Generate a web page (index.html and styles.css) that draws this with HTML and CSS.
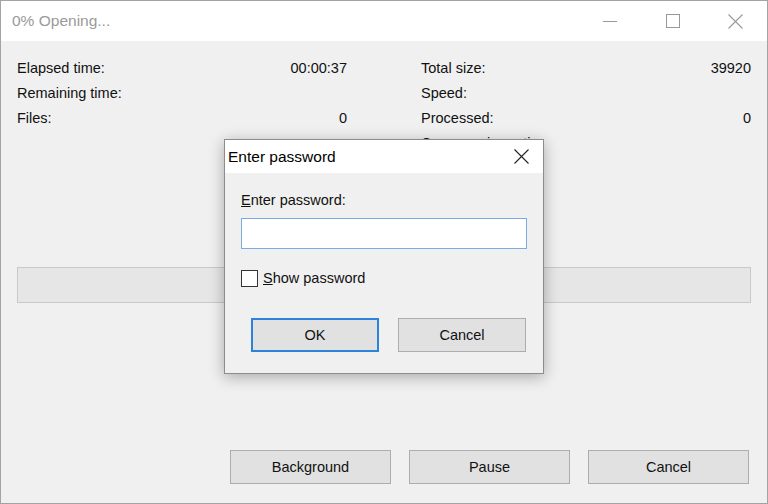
FILE: index.html
```html
<!DOCTYPE html>
<html lang="en">
<head>
  <meta charset="UTF-8" />
  <title>0% Opening...</title>
  <link rel="stylesheet" href="styles.css">
</head>
<body>
  <div class="window">
    <div class="titlebar">
      <span class="title">0% Opening...</span>
      <div class="controls">
        <span class="ctl">
          <svg width="14" height="14" viewBox="0 0 14 14"><path d="M0 7.5h14" stroke="#999" stroke-width="1" fill="none"/></svg>
        </span>
        <span class="ctl">
          <svg width="14" height="14" viewBox="0 0 14 14"><rect x="0.5" y="0.5" width="13" height="13" stroke="#999" stroke-width="1" fill="none"/></svg>
        </span>
        <span class="ctl">
          <svg width="15" height="15" viewBox="0 0 15 15"><path d="M0.5 0.5l14 14M14.5 0.5l-14 14" stroke="#999" stroke-width="1.1" fill="none"/></svg>
        </span>
      </div>
    </div>

    <div class="content">
      <div class="stats">
        <div class="col">
          <div class="row"><span>Elapsed time:</span><span>00:00:37</span></div>
          <div class="row"><span>Remaining time:</span><span></span></div>
          <div class="row"><span>Files:</span><span>0</span></div>
        </div>
        <div class="col">
          <div class="row"><span>Total size:</span><span>39920</span></div>
          <div class="row"><span>Speed:</span><span></span></div>
          <div class="row"><span>Processed:</span><span>0</span></div>
          <div class="row"><span>Compression ratio:</span><span></span></div>
        </div>
      </div>

      <div class="progress"></div>

      <div class="footer">
        <button class="btn wide">Background</button>
        <button class="btn wide">Pause</button>
        <button class="btn wide">Cancel</button>
      </div>
    </div>
  </div>

  <div class="dialog">
    <div class="dlg-titlebar">
      <span class="dlg-title">Enter password</span>
      <span class="dlg-close">
        <svg width="15" height="15" viewBox="0 0 15 15"><path d="M0.5 0.5l14 14M14.5 0.5l-14 14" stroke="#222" stroke-width="1.1" fill="none"/></svg>
      </span>
    </div>
    <div class="dlg-body">
      <div class="label"><u>E</u>nter password:</div>
      <input class="pwd" type="password" />
      <div class="check-row">
        <span class="checkbox"></span>
        <span><u>S</u>how password</span>
      </div>
      <div class="dlg-buttons">
        <button class="btn dlg-btn default">OK</button>
        <button class="btn dlg-btn">Cancel</button>
      </div>
    </div>
  </div>
</body>
</html>
```

FILE: styles.css
```css
body {
  margin: 0;
  font-family: "Liberation Sans", Arial, sans-serif;
  font-size: 14.5px;
  color: #111;
  background: #f0f0f0;
}
.window {
  box-sizing: border-box;
  width: 768px;
  height: 504px;
  border: 1px solid #a3a3a3;
  background: #f0f0f0;
  display: flex;
  flex-direction: column;
}
.titlebar {
  height: 40px;
  background: #fff;
  display: flex;
  align-items: center;
}
.title {
  padding-left: 11px;
  font-size: 15.5px;
  color: #9a9a9a;
}
.controls {
  margin-left: auto;
  display: flex;
}
.ctl {
  width: 63px;
  height: 40px;
  display: flex;
  align-items: center;
  justify-content: center;
}
.content {
  flex: 1;
  display: flex;
  flex-direction: column;
  padding: 15px 16px 19px;
}
.stats {
  display: grid;
  grid-template-columns: 330px 1fr;
  column-gap: 74px;
}
.row {
  display: flex;
  justify-content: space-between;
  line-height: 25px;
  height: 25px;
}
.progress {
  margin-top: 111px;
  height: 36px;
  box-sizing: border-box;
  background: #e6e6e6;
  border: 1px solid #c9c9c9;
}
.footer {
  margin-top: auto;
  display: flex;
  justify-content: flex-end;
  gap: 18px;
  padding-right: 2px;
}
.btn {
  box-sizing: border-box;
  height: 34px;
  background: #e1e1e1;
  border: 1px solid #adadad;
  font-family: inherit;
  font-size: 14.5px;
  color: #111;
  padding: 0;
}
.wide {
  width: 161px;
}

.dialog {
  position: absolute;
  left: 224px;
  top: 139px;
  width: 320px;
  box-sizing: border-box;
  border: 1px solid #8c8c8c;
  background: #f0f0f0;
  box-shadow: 0 3px 14px rgba(0, 0, 0, 0.3);
}
.dlg-titlebar {
  height: 33px;
  background: #fff;
  display: flex;
  align-items: center;
}
.dlg-title {
  padding-left: 3px;
  font-size: 15.5px;
  color: #000;
}
.dlg-close {
  margin-left: auto;
  width: 44px;
  height: 33px;
  display: flex;
  align-items: center;
  justify-content: center;
}
.dlg-body {
  padding: 17px 16px 21px;
}
.label {
  line-height: 20px;
}
.pwd {
  display: block;
  box-sizing: border-box;
  width: 100%;
  height: 31px;
  margin: 8px 0 0;
  border: 1px solid #7aaee3;
  background: #fff;
  outline: none;
}
.check-row {
  margin-top: 20px;
  height: 18px;
  display: flex;
  align-items: center;
}
.checkbox {
  box-sizing: border-box;
  width: 17px;
  height: 17px;
  border: 1px solid #333;
  background: #fff;
  margin-right: 5px;
}
.dlg-buttons {
  margin-top: 31px;
  display: flex;
  justify-content: flex-end;
  gap: 19px;
  padding-right: 1px;
}
.dlg-btn {
  width: 128px;
}
.default {
  border: 2px solid #2b83da;
}
```
